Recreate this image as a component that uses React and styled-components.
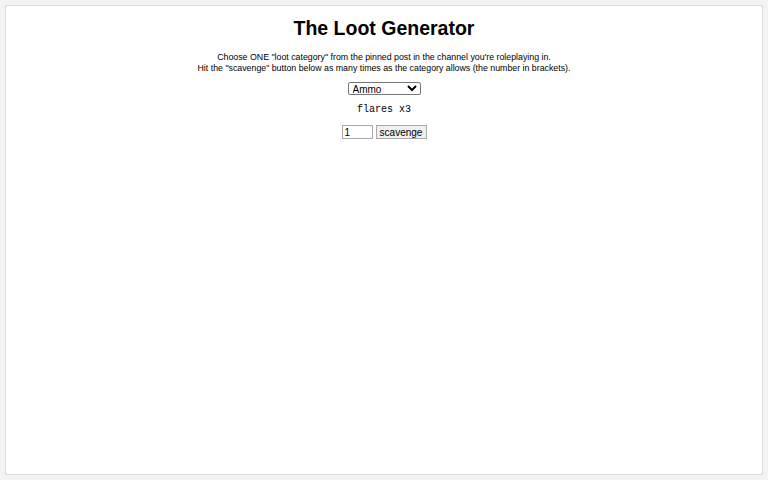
import React, { useState } from "react";
import styled, { createGlobalStyle } from "styled-components";

const GlobalStyle = createGlobalStyle`
  html, body {
    margin: 0;
    padding: 0;
    background: #f3f3f3;
    font-family: "Liberation Sans", Arial, sans-serif;
  }
`;

const Page = styled.div`
  box-sizing: border-box;
  height: 480px;
  padding: 5px;
`;

const Panel = styled.main`
  box-sizing: border-box;
  height: 470px;
  background: #fff;
  border: 1px solid #dcdcdc;
  display: flex;
  flex-direction: column;
  align-items: center;
  text-align: center;
  color: #000;
`;

const Title = styled.h1`
  margin: 10px 0 0;
  font-size: 19.5px;
  line-height: 24px;
  font-weight: bold;
`;

const Intro = styled.p`
  margin: 12px 0 0;
  font-size: 8.8px;
  line-height: 11px;
`;

const CategorySelect = styled.select`
  margin-top: 8px;
  width: 73px;
  height: 13px;
  font-family: "Liberation Sans", Arial, sans-serif;
  font-size: 10px;
  padding: 0;
  border: 1px solid #767676;
  border-radius: 2px;
  background: #fff;
`;

const Result = styled.pre`
  margin: 9px 0 0;
  font-family: "Liberation Mono", "Courier New", monospace;
  font-size: 10px;
  line-height: 12px;
`;

const Controls = styled.div`
  margin-top: 9px;
  display: flex;
  align-items: center;
  gap: 3px;
`;

const CountInput = styled.input`
  box-sizing: border-box;
  width: 31px;
  height: 14px;
  padding: 0 2px;
  font-family: "Liberation Sans", Arial, sans-serif;
  font-size: 10px;
  border: 1px solid #aaa;
`;

const ScavengeButton = styled.button`
  box-sizing: border-box;
  height: 14px;
  width: 51px;
  padding: 0 3px;
  font-family: "Liberation Sans", Arial, sans-serif;
  font-size: 10px;
  background: #efefef;
  border: 1px solid #aaa;
  border-radius: 0;
`;

export default function App() {
  const [category, setCategory] = useState("Ammo");
  const [count, setCount] = useState("1");

  return (
    <>
      <GlobalStyle />
      <Page>
        <Panel>
          <Title>The Loot Generator</Title>
          <Intro>
            Choose ONE "loot category" from the pinned post in the channel you're roleplaying in.
            <br />
            Hit the "scavenge" button below as many times as the category allows (the number in brackets).
          </Intro>
          <CategorySelect value={category} onChange={e => setCategory(e.target.value)}>
            <option>Ammo</option>
            <option>Food</option>
            <option>Medical</option>
            <option>Weapons</option>
          </CategorySelect>
          <Result>flares x3</Result>
          <Controls>
            <CountInput value={count} onChange={e => setCount(e.target.value)} />
            <ScavengeButton>scavenge</ScavengeButton>
          </Controls>
        </Panel>
      </Page>
    </>
  );
}
